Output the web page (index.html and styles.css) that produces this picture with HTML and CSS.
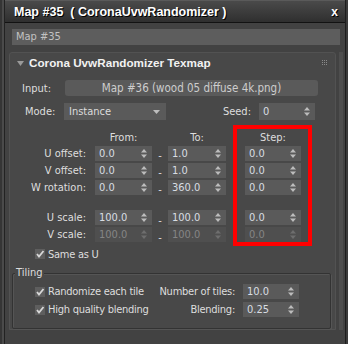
FILE: index.html
```html
<!DOCTYPE html>
<html>
<head>
<meta charset="utf-8">
<link rel="stylesheet" href="styles.css">
</head>
<body>
<div class="screen">
  <div class="side"></div>
  <div class="window">
    <div class="titlebar">
      <span class="title">Map #35&nbsp; ( CoronaUvwRandomizer )</span>
      <span class="close">x</span>
    </div>
    <div class="namefield">Map #35</div>
    <div class="content">
      <div class="rollout">
        <div class="rollout-head">
          <svg class="tri" width="7" height="5" viewBox="0 0 7 5"><polygon points="0,0 7,0 3.5,5" fill="#9a9a9a"/></svg>
          <span class="rollout-title">Corona UvwRandomizer Texmap</span>
          <svg class="grip" width="6" height="6" viewBox="0 0 6 6"><g fill="#8a8a8a"><rect x="0" y="0" width="1" height="1"/><rect x="2" y="0" width="1" height="1"/><rect x="4" y="0" width="1" height="1"/><rect x="0" y="2" width="1" height="1"/><rect x="2" y="2" width="1" height="1"/><rect x="4" y="2" width="1" height="1"/><rect x="0" y="4" width="1" height="1"/><rect x="2" y="4" width="1" height="1"/><rect x="4" y="4" width="1" height="1"/></g></svg>
        </div>

        <div class="row input-row">
          <span class="lbl input-lbl">Input:</span>
          <span class="mapbtn">Map #36 (wood 05 diffuse 4k.png)</span>
        </div>

        <div class="row mode-row">
          <span class="lbl mode-lbl">Mode:</span>
          <span class="dropdown">Instance<svg class="dd-arrow" width="7" height="4" viewBox="0 0 7 4"><polygon points="0,0 7,0 3.5,4" fill="#bdbdbd"/></svg></span>
          <span class="lbl seed-lbl">Seed:</span>
          <span class="spin seed-spin"><span class="val">0</span><svg class="arr" width="6" height="9" viewBox="0 0 6 9"><polygon points="3,0 6,3.5 0,3.5" fill="#bcbcbc"/><polygon points="0,5.5 6,5.5 3,9" fill="#bcbcbc"/></svg></span>
        </div>

        <div class="srow heads">
          <span class="slbl"></span>
          <span class="c1 head">From:</span>
          <span class="dash"></span>
          <span class="c2 head">To:</span>
          <span class="c3 head">Step:</span>
        </div>

        <div class="srow">
          <span class="slbl">U offset:</span>
          <span class="spin c1"><span class="val">0.0</span><svg class="arr" width="6" height="9" viewBox="0 0 6 9"><polygon points="3,0 6,3.5 0,3.5" fill="#bcbcbc"/><polygon points="0,5.5 6,5.5 3,9" fill="#bcbcbc"/></svg></span>
          <span class="dash">-</span>
          <span class="spin c2"><span class="val">1.0</span><svg class="arr" width="6" height="9" viewBox="0 0 6 9"><polygon points="3,0 6,3.5 0,3.5" fill="#bcbcbc"/><polygon points="0,5.5 6,5.5 3,9" fill="#bcbcbc"/></svg></span>
          <span class="spin c3"><span class="val">0.0</span><svg class="arr" width="6" height="9" viewBox="0 0 6 9"><polygon points="3,0 6,3.5 0,3.5" fill="#bcbcbc"/><polygon points="0,5.5 6,5.5 3,9" fill="#bcbcbc"/></svg></span>
        </div>
        <div class="srow">
          <span class="slbl">V offset:</span>
          <span class="spin c1"><span class="val">0.0</span><svg class="arr" width="6" height="9" viewBox="0 0 6 9"><polygon points="3,0 6,3.5 0,3.5" fill="#bcbcbc"/><polygon points="0,5.5 6,5.5 3,9" fill="#bcbcbc"/></svg></span>
          <span class="dash">-</span>
          <span class="spin c2"><span class="val">1.0</span><svg class="arr" width="6" height="9" viewBox="0 0 6 9"><polygon points="3,0 6,3.5 0,3.5" fill="#bcbcbc"/><polygon points="0,5.5 6,5.5 3,9" fill="#bcbcbc"/></svg></span>
          <span class="spin c3"><span class="val">0.0</span><svg class="arr" width="6" height="9" viewBox="0 0 6 9"><polygon points="3,0 6,3.5 0,3.5" fill="#bcbcbc"/><polygon points="0,5.5 6,5.5 3,9" fill="#bcbcbc"/></svg></span>
        </div>
        <div class="srow">
          <span class="slbl">W rotation:</span>
          <span class="spin c1"><span class="val">0.0</span><svg class="arr" width="6" height="9" viewBox="0 0 6 9"><polygon points="3,0 6,3.5 0,3.5" fill="#bcbcbc"/><polygon points="0,5.5 6,5.5 3,9" fill="#bcbcbc"/></svg></span>
          <span class="dash">-</span>
          <span class="spin c2"><span class="val">360.0</span><svg class="arr" width="6" height="9" viewBox="0 0 6 9"><polygon points="3,0 6,3.5 0,3.5" fill="#bcbcbc"/><polygon points="0,5.5 6,5.5 3,9" fill="#bcbcbc"/></svg></span>
          <span class="spin c3"><span class="val">0.0</span><svg class="arr" width="6" height="9" viewBox="0 0 6 9"><polygon points="3,0 6,3.5 0,3.5" fill="#bcbcbc"/><polygon points="0,5.5 6,5.5 3,9" fill="#bcbcbc"/></svg></span>
        </div>

        <div class="srow scale first-scale">
          <span class="slbl">U scale:</span>
          <span class="spin c1"><span class="val">100.0</span><svg class="arr" width="6" height="9" viewBox="0 0 6 9"><polygon points="3,0 6,3.5 0,3.5" fill="#bcbcbc"/><polygon points="0,5.5 6,5.5 3,9" fill="#bcbcbc"/></svg></span>
          <span class="dash low">-</span>
          <span class="spin c2"><span class="val">100.0</span><svg class="arr" width="6" height="9" viewBox="0 0 6 9"><polygon points="3,0 6,3.5 0,3.5" fill="#bcbcbc"/><polygon points="0,5.5 6,5.5 3,9" fill="#bcbcbc"/></svg></span>
          <span class="spin c3"><span class="val">0.0</span><svg class="arr" width="6" height="9" viewBox="0 0 6 9"><polygon points="3,0 6,3.5 0,3.5" fill="#bcbcbc"/><polygon points="0,5.5 6,5.5 3,9" fill="#bcbcbc"/></svg></span>
        </div>
        <div class="srow scale">
          <span class="slbl">V scale:</span>
          <span class="spin c1 off"><span class="val">100.0</span><svg class="arr" width="6" height="9" viewBox="0 0 6 9"><polygon points="3,0 6,3.5 0,3.5" fill="#6e6e6e"/><polygon points="0,5.5 6,5.5 3,9" fill="#6e6e6e"/></svg></span>
          <span class="dash low">-</span>
          <span class="spin c2 off"><span class="val">100.0</span><svg class="arr" width="6" height="9" viewBox="0 0 6 9"><polygon points="3,0 6,3.5 0,3.5" fill="#6e6e6e"/><polygon points="0,5.5 6,5.5 3,9" fill="#6e6e6e"/></svg></span>
          <span class="spin c3 off"><span class="val">0.0</span><svg class="arr" width="6" height="9" viewBox="0 0 6 9"><polygon points="3,0 6,3.5 0,3.5" fill="#6e6e6e"/><polygon points="0,5.5 6,5.5 3,9" fill="#6e6e6e"/></svg></span>
        </div>

        <div class="check same">
          <span class="box"><svg width="10" height="10" viewBox="0 0 10 10"><polyline points="2,5 4,7.5 8.5,2" fill="none" stroke="#d8d8d8" stroke-width="1.8"/></svg></span>
          <span>Same as U</span>
        </div>

        <div class="group">
          <span class="legend">Tiling</span>
          <div class="group-rows">
            <div class="grow">
              <div class="check">
                <span class="box"><svg width="10" height="10" viewBox="0 0 10 10"><polyline points="2,5 4,7.5 8.5,2" fill="none" stroke="#d8d8d8" stroke-width="1.8"/></svg></span>
                <span>Randomize each tile</span>
              </div>
              <span class="glbl">Number of tiles:</span>
              <span class="spin gspin"><span class="val">10.0</span><svg class="arr" width="6" height="9" viewBox="0 0 6 9"><polygon points="3,0 6,3.5 0,3.5" fill="#bcbcbc"/><polygon points="0,5.5 6,5.5 3,9" fill="#bcbcbc"/></svg></span>
            </div>
            <div class="grow">
              <div class="check">
                <span class="box"><svg width="10" height="10" viewBox="0 0 10 10"><polyline points="2,5 4,7.5 8.5,2" fill="none" stroke="#d8d8d8" stroke-width="1.8"/></svg></span>
                <span>High quality blending</span>
              </div>
              <span class="glbl">Blending:</span>
              <span class="spin gspin"><span class="val">0.25</span><svg class="arr" width="6" height="9" viewBox="0 0 6 9"><polygon points="3,0 6,3.5 0,3.5" fill="#bcbcbc"/><polygon points="0,5.5 6,5.5 3,9" fill="#bcbcbc"/></svg></span>
            </div>
          </div>
        </div>

        <div class="highlight"></div>
      </div>
      <div class="scrollbar"></div>
    </div>
  </div>
  <div class="rside"></div>
</div>
</body>
</html>
```

FILE: styles.css
```css
* { box-sizing: border-box; }
body {
  margin: 0;
  background: #333;
  font-family: "DejaVu Sans", "Liberation Sans", Arial, sans-serif;
  font-stretch: condensed;
  font-size: 11px;
  color: #dedede;
  white-space: nowrap;
}
.screen {
  display: flex;
  width: 348px;
  height: 344px;
  overflow: hidden;
}
.side {
  width: 5px;
  background: #353535;
  border-right: 1px solid #222;
  box-shadow: inset -2px 0 0 #4a4a4a;
}
.rside {
  width: 3px;
  background: #3a3a3a;
  border-left: 1px solid #1e1e1e;
}
.window {
  width: 340px;
  background: #424242;
  display: flex;
  flex-direction: column;
}
.titlebar {
  height: 23px;
  flex: none;
  background: linear-gradient(#4a4a4a, #2f2f2f);
  border-top: 1px solid #5a5a5a;
  border-bottom: 1px solid #121212;
  display: flex;
  align-items: center;
  justify-content: space-between;
  padding: 0 7px 0 9px;
  color: #fff;
  font-family: "Liberation Sans", Arial, sans-serif;
  font-stretch: normal;
  font-weight: bold;
  font-size: 12.5px;
  text-shadow: 1px 1px 0 #000;
}
.close { font-size: 12px; }
.namefield {
  flex: none;
  margin: 6px 5px 0 7px;
  height: 16px;
  line-height: 16px;
  background: #5d5d5d;
  color: #c2c2c2;
  padding-left: 4px;
}
.content {
  flex: 1;
  display: flex;
  margin-top: 7px;
}
.rollout {
  position: relative;
  margin-left: 4px;
  width: 327px;
  height: 278px;
  background: #484848;
  border-radius: 3px 3px 0 0;
  border: 1px solid #525252;
}
.scrollbar {
  margin-left: 3px;
  width: 4px;
  height: 278px;
  background: #4e4e4e;
}
.rollout-head {
  height: 19px;
  display: flex;
  align-items: center;
  padding-left: 7px;
}
.tri { margin-top: 1px; }
.rollout-title {
  margin-left: 5px;
  font-family: "Liberation Sans", Arial, sans-serif;
  font-stretch: normal;
  font-weight: bold;
  font-size: 11.7px;
  color: #f2f2f2;
}
.grip { margin-left: auto; margin-right: 7px; }

.row { display: flex; align-items: center; }
.lbl { color: #dedede; }
.input-row { margin-top: 8px; height: 16px; }
.input-lbl { width: 55px; padding-left: 12px; }
.mapbtn {
  width: 253px;
  height: 16px;
  line-height: 16px;
  background: #5a5a5a;
  border-radius: 3px;
  text-align: center;
  color: #cdcdcd;
  font-size: 11.5px;
}
.mode-row { margin-top: 7px; height: 17px; }
.mode-lbl { width: 54px; padding-left: 15px; }
.dropdown {
  width: 102px;
  height: 17px;
  background: #5a5a5a;
  display: flex;
  align-items: center;
  padding-left: 5px;
  color: #dcdcdc;
}
.dd-arrow { margin-left: auto; margin-right: 6px; }
.seed-lbl { width: 93px; text-align: right; padding-right: 8px; }
.spin {
  height: 15px;
  background: #5a5a5a;
  display: flex;
  align-items: center;
  padding-left: 4px;
  color: #d8dde2;
}
.spin .arr { margin-left: auto; margin-right: 5px; }
.spin.off { background: #4f4f4f; color: #858585; }
.seed-spin { width: 56px; height: 17px; }

.srow {
  display: flex;
  align-items: center;
  height: 15px;
  margin-top: 2px;
}
.srow.heads { margin-top: 10px; height: 14px; }
.slbl {
  width: 85px;
  text-align: right;
  padding-right: 9px;
}
.c1 { width: 57px; }
.c2 { width: 58px; }
.c3 { width: 56px; margin-left: 19px; }
.head { text-align: center; display: block; }
.dash { width: 16px; text-align: center; padding-top: 3px; }
.dash.low { padding-top: 6px; }
.first-scale { margin-top: 15px; }

.check { display: flex; align-items: center; flex: none; letter-spacing: -0.25px; }
.box {
  width: 10px;
  height: 10px;
  background: #5e5e5e;
  margin-right: 3px;
  display: flex;
}
.same { margin-top: 5px; margin-left: 25px; height: 14px; }

.group {
  position: relative;
  margin: 12px 4px 0 2px;
  height: 56px;
  border: 1px solid #333;
  box-shadow: inset 1px 1px 0 #555, 1px 1px 0 #555;
  border-radius: 2px;
}
.legend {
  position: absolute;
  left: 2px;
  top: -8px;
  padding: 0 1px;
  background: #484848;
  line-height: 14px;
}
.group-rows { padding-top: 10px; }
.grow { display: flex; align-items: center; height: 15px; margin-bottom: 3px; padding-left: 22px; }
.glbl { margin-left: auto; text-align: right; padding-right: 8px; letter-spacing: -0.25px; }
.gspin { width: 56px; margin-right: 31px; }

.highlight {
  position: absolute;
  left: 223px;
  top: 72px;
  width: 79px;
  height: 121px;
  border: 4px solid #f00;
}
```
